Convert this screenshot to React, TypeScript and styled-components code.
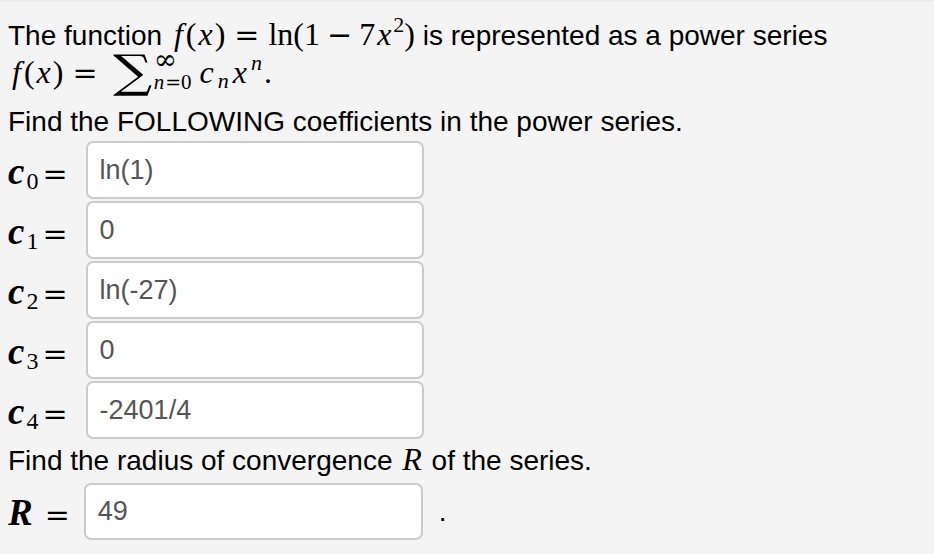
import { createGlobalStyle, styled } from 'styled-components'

const coefficients = [
  { index: '0', value: 'ln(1)' },
  { index: '1', value: '0' },
  { index: '2', value: 'ln(-27)' },
  { index: '3', value: '0' },
  { index: '4', value: '-2401/4' },
]

const GlobalStyle = createGlobalStyle`
  html, body {
    margin: 0;
    padding: 0;
    background: #f4f4f4;
  }
  body {
    font-family: "Liberation Sans", Arial, Helvetica, sans-serif;
    color: #000;
  }
`

const App = () => {
  return (
    <>
      <GlobalStyle />
      <Page>
        <Para $gap={12}>
          The function{' '}
          <Math>
            <Var $wide>f</Var>(<Var>x</Var>)<Op>=</Op>ln(1<Op $minus>−</Op>7<Var>x</Var>
            <Sup>2</Sup>)
          </Math>{' '}
          is represented as a power series
          <br />
          <Math>
            <Var $wide>f</Var>(<Var>x</Var>)<Op>=</Op>
            <Sigma>∑</Sigma>
            <Limits>
              <LimitTop>∞</LimitTop>
              <LimitBottom>
                <LimitVar>n</LimitVar>
                <LimitEq>=</LimitEq>0
              </LimitBottom>
            </Limits>
            <Var>c</Var>
            <Sub>
              <Var>n</Var>
            </Sub>
            <Var>x</Var>
            <Sup>
              <Var>n</Var>
            </Sup>
            .
          </Math>
        </Para>
        <Para $gap={1}>Find the FOLLOWING coefficients in the power series.</Para>
        <CoefList>
          {coefficients.map((c) => (
            <AnswerRow key={c.index}>
              <Label>
                <LabelVar>c</LabelVar>
                <LabelSub>{c.index}</LabelSub>
                <LabelEq>=</LabelEq>
              </Label>
              <AnswerBox readOnly value={c.value} $width={338} />
            </AnswerRow>
          ))}
        </CoefList>
        <Para $gap={4} $top={2}>
          Find the radius of convergence{' '}
          <Math>
            <Var>R</Var>
          </Math>{' '}
          of the series.
        </Para>
        <AnswerRow>
          <Label>
            <LabelVar>R</LabelVar>
            <LabelEq $narrow>=</LabelEq>
          </Label>
          <AnswerBox readOnly value="49" $width={339} $tight />
          <Period>.</Period>
        </AnswerRow>
      </Page>
    </>
  )
}

const Page = styled('div')({
  borderTop: '2px solid #ebebeb',
  padding: '14px 8px 16px 8px',
  fontSize: '28px',
})

const Para = styled('div')<{ $gap: number; $top?: number }>((p) => ({
  lineHeight: '36px',
  margin: `${p.$top ?? 0}px 0 ${p.$gap}px 0`,
}))

const Math = styled('span')({
  fontFamily: '"Liberation Serif", "Times New Roman", serif',
  fontSize: '32px',
  whiteSpace: 'nowrap',
})

const Var = styled('i')<{ $wide?: boolean }>((p) => ({
  fontFamily: '"Liberation Serif", "Times New Roman", serif',
  fontStyle: 'italic',
  padding: p.$wide ? '0 3px 0 4px' : '0 2px',
}))

const Op = styled('span')<{ $minus?: boolean }>((p) => ({
  fontFamily: '"DejaVu Serif", serif',
  fontSize: '30px',
  margin: p.$minus ? '0 7px' : '0 9px',
}))

const Sup = styled('sup')({
  fontSize: '22px',
  verticalAlign: '13px',
  lineHeight: 0,
})

const Sub = styled('sub')({
  fontSize: '22px',
  verticalAlign: '-5px',
  lineHeight: 0,
})

const Sigma = styled('span')({
  display: 'inline-block',
  fontFamily: '"DejaVu Serif", serif',
  fontSize: '45px',
  lineHeight: 0,
  verticalAlign: '-4px',
  transform: 'scaleX(1.22)',
  transformOrigin: 'left center',
  margin: '0 9px 0 6px',
})

const Limits = styled('span')({
  display: 'inline-flex',
  flexDirection: 'column',
  verticalAlign: '14px',
  fontSize: '21px',
  lineHeight: '23px',
  margin: '-12px 6px -12px 0',
})

const LimitTop = styled('span')({
  fontFamily: '"DejaVu Serif", serif',
  fontSize: '28px',
  lineHeight: '23px',
})

const LimitBottom = styled('span')({
  whiteSpace: 'nowrap',
})

const LimitVar = styled('i')({
  fontStyle: 'italic',
  paddingRight: '1px',
})

const LimitEq = styled('span')({
  fontFamily: '"DejaVu Serif", serif',
  fontSize: '19px',
})

const CoefList = styled('div')({
  display: 'flex',
  flexDirection: 'column',
  gap: '2px',
})

const AnswerRow = styled('div')({
  display: 'flex',
  alignItems: 'center',
})

const Label = styled('span')({
  fontFamily: '"Liberation Serif", "Times New Roman", serif',
  display: 'inline-flex',
  alignItems: 'baseline',
  marginTop: '2px',
})

const LabelVar = styled('i')({
  fontSize: '37px',
  fontStyle: 'italic',
  fontWeight: 700,
})

const LabelSub = styled('span')({
  fontSize: '24px',
  position: 'relative',
  top: '5px',
  marginLeft: '2px',
})

const LabelEq = styled('span')<{ $narrow?: boolean }>((p) => ({
  fontFamily: '"DejaVu Serif", serif',
  fontSize: '30px',
  margin: p.$narrow ? '0 14px 0 12px' : '0 18px 0 4px',
}))

const AnswerBox = styled('input')<{ $width: number; $tight?: boolean }>((p) => ({
  boxSizing: 'border-box',
  width: `${p.$width}px`,
  height: p.$tight ? '57px' : '58px',
  border: '2px solid #cbcbcb',
  borderRadius: '7px',
  background: '#fff',
  padding: '0 12px',
  fontFamily: '"Liberation Sans", Arial, Helvetica, sans-serif',
  fontSize: '27px',
  color: '#555',
  outline: 'none',
}))

const Period = styled('span')({
  fontSize: '28px',
  marginLeft: '16px',
})

export default App
